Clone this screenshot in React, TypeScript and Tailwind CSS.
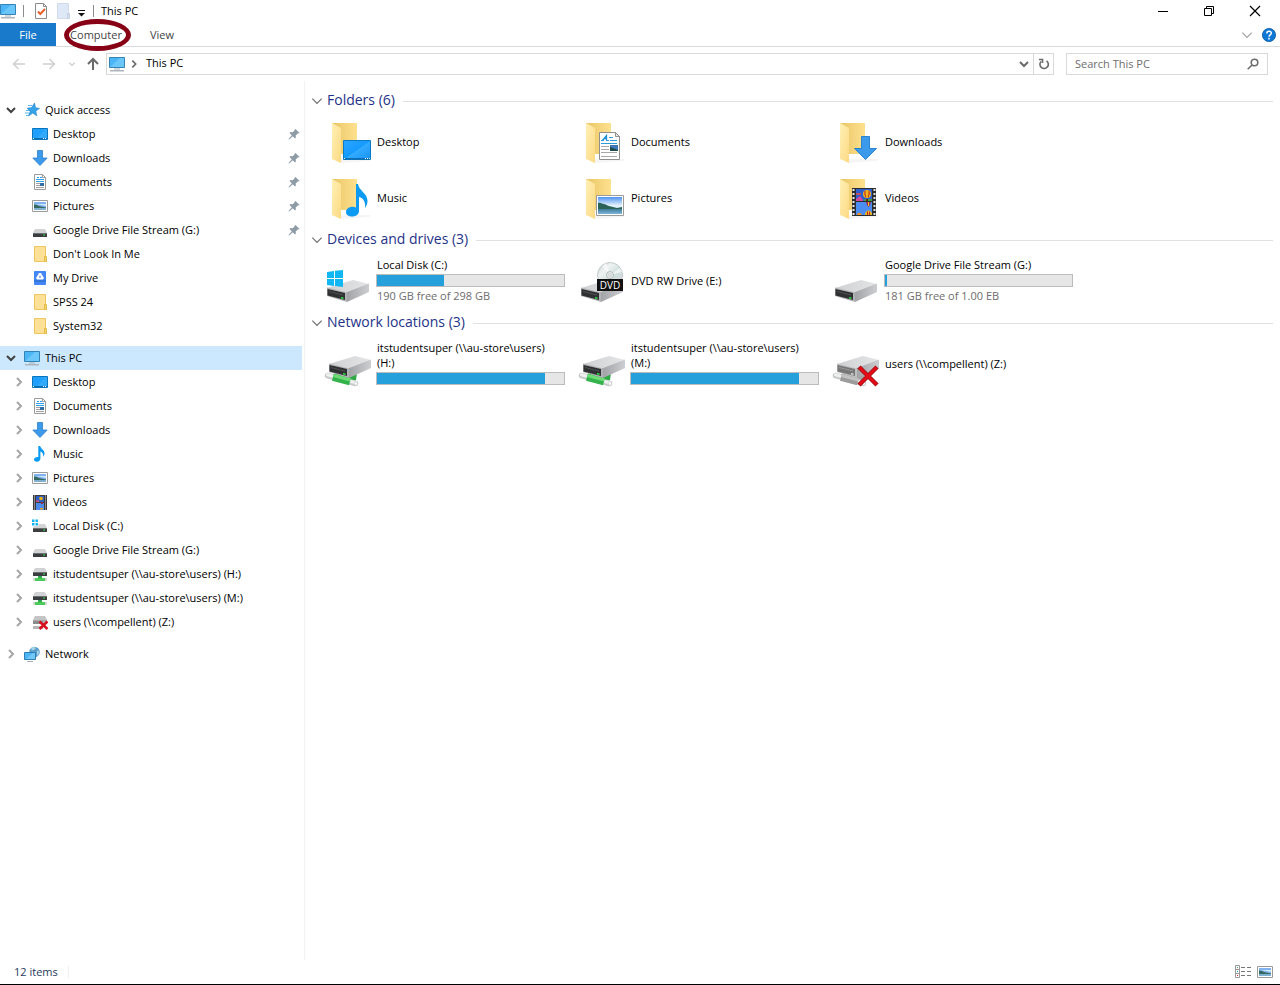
import { useState } from "react";
import type { ReactNode } from "react";

type IconName =
  | "pc"
  | "desktop"
  | "downloads"
  | "documents"
  | "pictures"
  | "music"
  | "videos"
  | "drive"
  | "osdrive"
  | "netdrive"
  | "brokendrive"
  | "folder"
  | "gdrive"
  | "star"
  | "network";

type TreeItem = { id: string; label: string; icon: IconName; pinned?: boolean };

const quickAccess: TreeItem[] = [
  { id: "qa-desktop", label: "Desktop", icon: "desktop", pinned: true },
  { id: "qa-downloads", label: "Downloads", icon: "downloads", pinned: true },
  { id: "qa-documents", label: "Documents", icon: "documents", pinned: true },
  { id: "qa-pictures", label: "Pictures", icon: "pictures", pinned: true },
  { id: "qa-g", label: "Google Drive File Stream (G:)", icon: "drive", pinned: true },
  { id: "qa-look", label: "Don't Look In Me", icon: "folder" },
  { id: "qa-mydrive", label: "My Drive", icon: "gdrive" },
  { id: "qa-spss", label: "SPSS 24", icon: "folder" },
  { id: "qa-sys", label: "System32", icon: "folder" },
];

const thisPc: TreeItem[] = [
  { id: "desktop", label: "Desktop", icon: "desktop" },
  { id: "documents", label: "Documents", icon: "documents" },
  { id: "downloads", label: "Downloads", icon: "downloads" },
  { id: "music", label: "Music", icon: "music" },
  { id: "pictures", label: "Pictures", icon: "pictures" },
  { id: "videos", label: "Videos", icon: "videos" },
  { id: "c", label: "Local Disk (C:)", icon: "osdrive" },
  { id: "g", label: "Google Drive File Stream (G:)", icon: "drive" },
  { id: "h", label: "itstudentsuper (\\\\au-store\\users) (H:)", icon: "netdrive" },
  { id: "m", label: "itstudentsuper (\\\\au-store\\users) (M:)", icon: "netdrive" },
  { id: "z", label: "users (\\\\compellent) (Z:)", icon: "brokendrive" },
];

function SmallDrive({ y, light }: { y: number; light?: boolean }) {
  return (
    <g transform={`translate(0 ${y})`}>
      <path d="M3 0h10l2 4H1z" fill={light ? "#c4c4c4" : "#d2d3d5"} />
      <path d="M1 4h14v4H1z" fill={light ? "#8c8c8c" : "#3a3d40"} />
      <path d="M1 4h14v1H1z" fill={light ? "#a8a8a8" : "#6d7073"} />
      <path d="M11 5.5h2v1h-2z" fill={light ? "#ddd" : "#3be04a"} />
    </g>
  );
}

function MiniPhoto() {
  return (
    <>
      <path d="M.5 2.500h15v11H.5z" fill="#fff" stroke="#9b9b9b" />
      <path d="M2 4h12v8H2z" fill="#7fb2ee" />
      <path d="M2 6c4 0 7 1 12 2V6z" fill="#d3e8fa" />
      <path d="M2 6.500c3 0 4 1.500 7 2l5 1v.5H2z" fill="#35695f" />
      <path d="M2 10h12v2H2z" fill="#7fb0d2" />
    </>
  );
}

function SmallIcon({ name }: { name: IconName }) {
  const art: Record<IconName, ReactNode> = {
    pc: (
      <>
        <path d="M.5 1.500h15v10H.5z" fill="#4bb5f5" stroke="#3383b5" />
        <path d="M1 11 11 2h4v9z" fill="#79cdfb" opacity=".7" />
        <path d="M5 12.500h6v1H5z" fill="#a3b3bd" />
        <path d="M1 14h14v1.500H1z" fill="#aeb6bb" />
      </>
    ),
    desktop: (
      <>
        <path d="M.5 2.500h15v11H.5z" fill="#1e9ffb" stroke="#0a75bd" />
        <path d="M5 12 13 3h2v9z" fill="#3fb0ff" opacity=".6" />
        <path d="M1 12h14v1H1z" fill="#0a6cb0" />
        <path d="M1 12h1v1H1zM11 12h1v1h-1zM13 12h1v1h-1z" fill="#fff" />
      </>
    ),
    downloads: <path d="M5.500.5h5V8h4.700L8 15.500.8 8h4.700z" fill="#3c9aea" stroke="#2c7fc9" strokeWidth=".8" />,
    documents: (
      <>
        <path d="M2.500.5h8l3 3v12h-11z" fill="#fff" stroke="#9a9a9a" />
        <path d="M10.500.5v3h3" fill="none" stroke="#9a9a9a" />
        <path d="M4 5.500h8M4 7.500h8M5 3.500h2M8 3.500h2" stroke="#2b9fe8" />
        <path d="M4 9.500h4M4 11.500h4M4 13.500h8" stroke="#a0a0a0" />
        <path d="M8 9h4v3H8z" fill="#2f6fa8" />
      </>
    ),
    pictures: <MiniPhoto />,
    music: <path d="M6.300 0h1.900c.3 2.800 4.800 4 4.300 7.800-.2 1.500-.9 2.200-1.500 3 .5-2.700-.4-4.500-2.600-5.400V12.500c0 2-1.400 3.200-3.400 3.300C3.200 15.900 2 15 2 13.600c0-1.700 2-2.900 4.300-2.500z" fill="#0c9bf3" />,
    videos: (
      <>
        <path d="M1 1h14v15H1z" fill="#3b3b3b" />
        <path d="M4 2h8v6H4z" fill="#315dc0" />
        <path d="M4 9h8v7H4z" fill="#4c8bea" />
        <path d="M2.500 1.500V16M13.500 1.500V16" stroke="#d8d8d8" strokeDasharray="1 1" />
        <circle cx="9" cy="4.500" r="1.800" fill="#eab414" />
        <path d="M4 6.500h3V8H4z" fill="#d44c8c" />
        <path d="M9 8h2v2H9z" fill="#8e2c48" />
        <path d="M8 14h3v1.500H8z" fill="#e9a71a" />
      </>
    ),
    drive: <SmallDrive y={7} />,
    osdrive: (
      <>
        <SmallDrive y={6} />
        <path d="M0 1h6.500v7H0z" fill="#fff" />
        <path d="M0 1.500h2.500V4H0zM3.500 1.500H6V4H3.500zM0 5h2.500v2.500H0zM3.500 5H6v2.500H3.500z" fill="#10b4f1" />
        <path d="M1 10h14v1H1z" fill="#6d7073" />
      </>
    ),
    netdrive: (
      <>
        <SmallDrive y={2} />
        <path d="M6 10h4v2H6z" fill="#2fa84b" />
        <path d="M2 12h12v3H2z" fill="#4bcb5e" />
        <path d="M1 12h2v3H1zM13 12h2v3h-2z" fill="#d7dad8" />
      </>
    ),
    brokendrive: (
      <>
        <SmallDrive y={2} light />
        <path d="M1 12h10v3H1z" fill="#b5b5b5" />
        <path d="m7.500 7.500 8 7.500M15.500 7.500l-8 7.500" stroke="#d6101c" strokeWidth="2.600" />
      </>
    ),
    folder: (
      <>
        <path d="M2.500.5h11v10l1 .5v4.500h-12z" fill="#fee096" stroke="#edc75d" />
        <path d="M12.500 10.500h2v5h-2z" fill="#fbd777" stroke="#e3b947" />
      </>
    ),
    gdrive: (
      <>
        <rect x="2" y="1" width="12" height="14" rx="1" fill="#4285f4" />
        <path d="M2 10.500h12v1H2z" fill="#2a63c9" />
        <path d="m7 3h2l3 5-1 1.500H5L4 8zm1 2.500L6.800 7.500h2.400z" fill="#fff" fillRule="evenodd" />
      </>
    ),
    star: (
      <>
        <path d="m10.500 1 1 4.700 4 .7-3.700 2.600.9 4.800-3.900-2.700L4.500 14l1.700-4.600L3.200 6.200l4.500-.6z" fill="#35a3e8" stroke="#1b7fc4" strokeWidth=".6" />
        <path d="M4 3.500h4M2 8.500h3M1 11h4M2 13.500h2" stroke="#5bb8ee" />
      </>
    ),
    network: (
      <>
        <circle cx="10.500" cy="6" r="5.300" fill="#5b9fc9" />
        <path d="M7 2c2-1.500 4-1 5 0l-2 2-2 .5zM13 5l2-.5c.5 3-1 5-2 5.500z" fill="#a4d2ea" />
        <path d="M.5 6.500h11v7H.5z" fill="#4bb5f5" stroke="#2f7fb3" />
        <path d="m2 13 7-6h2v6z" fill="#83d1fb" opacity=".7" />
        <path d="M3 15.500h6" stroke="#a4afb6" />
      </>
    ),
  };
  return (
    <svg className="h-4 w-4 shrink-0" viewBox="0 0 16 16" aria-hidden="true">
      {art[name]}
    </svg>
  );
}

function Balloon({ x, y }: { x: number; y: number }) {
  return (
    <g transform={`translate(${x} ${y})`}>
      <circle r="4" fill="#f0b71c" />
      <path d="M-2.500-3Q-3.500 0-1.500 3.500h.8Q-2 0-1.500-3.500zM2.500-3Q3.500 0 1.500 3.500H.7Q2 0 1.500-3.500z" fill="#c5232c" />
      <path d="M-1 5h2v2h-2z" fill="#5b3218" />
    </g>
  );
}

function FolderArt({ children }: { children: ReactNode }) {
  return (
    <svg className="h-12 w-12 shrink-0" viewBox="0 0 48 48" aria-hidden="true">
      <defs>
        <linearGradient id="folderBack" x1="0" x2="1">
          <stop offset="0" stopColor="#e9c566" />
          <stop offset="1" stopColor="#fee18f" />
        </linearGradient>
        <linearGradient id="folderFlap" x1="0" x2="1" y2="1">
          <stop offset="0" stopColor="#fff0b5" />
          <stop offset="1" stopColor="#fcd983" />
        </linearGradient>
        <linearGradient id="screen" x1="0" x2="1" y2="1">
          <stop offset="0" stopColor="#2ba6ff" />
          <stop offset=".5" stopColor="#159aff" />
          <stop offset=".51" stopColor="#33abff" />
          <stop offset="1" stopColor="#1794f4" />
        </linearGradient>
        <linearGradient id="sky" x2="0" y2="1">
          <stop offset="0" stopColor="#4e92f0" />
          <stop offset=".5" stopColor="#e4f2fc" />
          <stop offset="1" stopColor="#b8d8ef" />
        </linearGradient>
        <linearGradient id="lake" x2="0" y2="1">
          <stop offset="0" stopColor="#3f7d97" />
          <stop offset="1" stopColor="#7db4dc" />
        </linearGradient>
      </defs>
      <path d="M16 41h30l-2 2-28 2z" fill="#000" opacity=".04" />
      <path d="M7 5h25v31H7z" fill="url(#folderBack)" />
      <path d="m7 5 9 5v35l-9-4z" fill="url(#folderFlap)" />
      {children}
    </svg>
  );
}

const folders: { label: string; art: ReactNode }[] = [
  {
    label: "Desktop",
    art: (
      <>
        <path d="M18.500 22.500h27v19h-27z" fill="url(#screen)" stroke="#0b78c2" />
        <path d="M19 40h26v1.500H19z" fill="#0a6fb5" />
        <path d="M19 40h1v1h-1zM40 40h1v1h-1zM42 40h1v1h-1zM44 40h1v1h-1z" fill="#fff" />
      </>
    ),
  },
  {
    label: "Documents",
    art: (
      <>
        <path d="M20.500 14.500h16l4 4v23h-20z" fill="#fff" stroke="#8f8f8f" />
        <path d="M36.500 14.500v4h4z" fill="#e8e8e8" stroke="#8f8f8f" />
        <path d="m23.500 22.500 4-5v5M25 20.500h3" fill="none" stroke="#1d8fd3" strokeWidth="1.300" />
        <path d="M22 22.500h3M27 22.500h3M30 19.500h4M31 22.500h7M22 25.500h16" stroke="#2c9be0" />
        <path d="M22 28.500h8M22 31.500h8M22 34.500h16M22 38.500h16" stroke="#a8a8a8" />
        <path d="M31 27h8v6h-8z" fill="#3c78b5" />
        <path d="m31 29 8 3v1h-8z" fill="#1d4c4a" />
      </>
    ),
  },
  {
    label: "Downloads",
    art: <path d="M28.500 18.500h8v12h7l-11 11-11-11h7z" fill="#3c9aea" stroke="#2b83d1" />,
  },
  {
    label: "Music",
    art: <path d="M31 10h2c1 7 9.500 9 9.500 17 0 3-1.200 5-2.500 7 .8-6-1.500-10-6-11v14c0 3.300-3 5.500-7 5.500-3.500 0-6-1.700-6-4.500 0-3.800 5-6.300 10-4.600z" fill="#0c9bf3" />,
  },
  {
    label: "Pictures",
    art: (
      <>
        <path d="M17.500 21.500h27v20h-27z" fill="#fff" stroke="#9b9b9b" />
        <path d="M19 23h24v17H19z" fill="url(#sky)" />
        <path d="M19 29c3-1 4 1 6 1s4 2.500 7 2.500l6 1.500 5-1v3H19z" fill="#2b6257" />
        <path d="M19 35h24v5H19z" fill="url(#lake)" />
      </>
    ),
  },
  {
    label: "Videos",
    art: (
      <>
        <path d="M19 14h24v28H19z" fill="#2c2c2c" />
        <path d="M23 15h16v12H23z" fill="#2d5ed0" />
        <path d="M23 28h16v13H23z" fill="#4b8df0" />
        <path d="M20.500 15v26M41.500 15v26" stroke="#e6e6e6" strokeWidth="2" strokeDasharray="2 2" />
        <path d="m23 25 4-3 3 4v1h-7z" fill="#d5489a" />
        <path d="M23 19h5v2h-5z" fill="#c25060" />
        <path d="M31 25h8v2h-8z" fill="#3d9f49" />
        <Balloon x={34} y={20} />
        <path d="M33 28h5l-1 3-1.500 2L34 31z" fill="#9c2b4a" />
        <path d="M35 28h1v4h-1z" fill="#f2c21d" />
        <path d="M32 41c0-6 7-6 7 0z" fill="#f0b71c" />
        <path d="M34 37.500h1V41h-1zM36 37.500h1V41h-1z" fill="#c5232c" />
        <path d="M24 41c0-3 4-3 5 0z" fill="#e98f25" />
      </>
    ),
  },
];

function DriveBody({ broken }: { broken?: boolean }) {
  return (
    <>
      <path d="m2 31 26-8 16 4-22 9z" fill="url(#driveTop)" />
      <path d="m21 35.500 23-9V35l-22 10z" fill="url(#driveSide)" />
      <path d="m2 30.500 20 5V45L2 39z" fill={broken ? "#c0c0c0" : "#b1b2b5"} />
      <path d="M2.500 32 20 36v7L2.500 38.500z" fill={broken ? "#777" : "#2f3032"} />
      <path d="M4 34.500 18 38" stroke={broken ? "#999" : "#4f5153"} />
      <path d="m16 40 2.500.5V42L16 41.500z" fill={broken ? "#ddd" : "#2fe042"} />
    </>
  );
}

function NetworkPipe({ broken }: { broken?: boolean }) {
  return (
    <>
      <path d="m22 36 10-3-1 7-7 3z" fill={broken ? "#a6a6a6" : "#2fa846"} />
      <path d="m2.500 35.500 28 8" stroke="#c5c9c7" strokeWidth="5.500" strokeLinecap="round" />
      <path d="m2.500 34.800 28 8" stroke="#eef0ef" strokeWidth="3" strokeLinecap="round" />
      <path d="m8 37 17 4.500" stroke={broken ? "#9c9c9c" : "#34b34c"} strokeWidth="8" />
      <path d="m8.500 35.500 17 4.500" stroke={broken ? "#c2c2c2" : "#6edb76"} strokeWidth="3" />
      <ellipse cx="31" cy="43.500" rx="1.500" ry="2" fill="#fff" stroke="#c3c8c5" strokeWidth=".6" />
    </>
  );
}

function DriveArt({ kind }: { kind: "os" | "dvd" | "plain" | "net" | "broken" }) {
  const networked = kind === "net" || kind === "broken";
  return (
    <svg className="h-12 w-12 shrink-0 overflow-visible" viewBox="0 0 48 48" aria-hidden="true">
      <defs>
        <linearGradient id="driveTop" x1="0" x2="1">
          <stop offset="0" stopColor="#cfd0d2" />
          <stop offset="1" stopColor="#e4e5e7" />
        </linearGradient>
        <linearGradient id="driveSide" x1="0" x2="1">
          <stop offset="0" stopColor="#a0a1a4" />
          <stop offset="1" stopColor="#cdced1" />
        </linearGradient>
        <linearGradient id="disc" x1="0" x2="1" y2="1">
          <stop offset="0" stopColor="#c5cdcd" />
          <stop offset=".3" stopColor="#eef2f2" />
          <stop offset=".6" stopColor="#cfe0dc" />
          <stop offset="1" stopColor="#dcd6e2" />
        </linearGradient>
      </defs>
      {networked && <NetworkPipe broken={kind === "broken"} />}
      <g transform={networked ? "translate(2 -7)" : undefined}>
        <DriveBody broken={kind === "broken"} />
      </g>
      {kind === "os" && (
        <path d="m2 15 7-1v7H2zM10 13.800 18 13v8h-8zM2 22h7v7l-7-1zM10 22h8v8l-8-1z" fill="#10b7f3" />
      )}
      {kind === "dvd" && (
        <>
          <circle cx="31" cy="18" r="12.500" fill="url(#disc)" stroke="#b9c0c0" strokeWidth=".8" />
          <path d="M31 18 23 9l4-3zM31 18l10-7 2 4z" fill="#fff" opacity=".6" />
          <circle cx="31" cy="18" r="3.500" fill="#e7eaea" stroke="#aab2b2" strokeWidth=".8" />
          <circle cx="31" cy="18" r="1.300" fill="#fff" stroke="#aab2b2" strokeWidth=".6" />
          <path d="M18 22h26v12H18z" fill="#111" />
          <text x="31" y="32" fill="#fff" fontSize="10" textAnchor="middle" fontFamily="Open Sans, sans-serif">
            DVD
          </text>
        </>
      )}
      {kind === "broken" && (
        <>
          <path d="m26 27 18 18M44 27 26 45" stroke="#9c0d14" strokeWidth="4.500" />
          <path d="m26.500 27.500 17 17M43.500 27.500l-17 17" stroke="#e30d18" strokeWidth="3" />
        </>
      )}
    </svg>
  );
}

function Chevron({ dir, className }: { dir: "down" | "right"; className: string }) {
  return (
    <svg className={className} viewBox="0 0 12 12" fill="none" stroke="currentColor" aria-hidden="true">
      <path d={dir === "down" ? "m2 4 4 4 4-4" : "m4 2 4 4-4 4"} />
    </svg>
  );
}

function Pin() {
  return (
    <svg className="ml-auto h-3 w-3 text-[#8d9ba5]" viewBox="0 0 12 12" aria-hidden="true">
      <path d="m7.500 1 4 4-1.200.5-.6-.1-2 2 .2 2.200-.9.900-2.300-2.300L1.200 11.500.5 11l3.300-3.700L1.500 5l.9-.9 2.300.2 2-2-.1-.7z" fill="currentColor" />
    </svg>
  );
}

type RowProps = {
  item: TreeItem;
  level: 0 | 1;
  chevron?: "down" | "right";
  selected?: boolean;
  onSelect: (id: string) => void;
};

function TreeRow({ item, level, chevron, selected, onSelect }: RowProps) {
  return (
    <button
      type="button"
      onClick={() => onSelect(item.id)}
      className={`flex h-6 w-full items-center pr-[2px] text-left whitespace-nowrap ${
        level === 0 ? "pl-1" : "pl-3"
      } ${selected ? "bg-[#cce8ff]" : "hover:bg-[#e5f3ff]"}`}
    >
      <span className="w-5 shrink-0">
        {chevron && (
          <Chevron
            dir={chevron}
            className={`ml-px h-3 w-3 stroke-2 ${chevron === "down" ? "text-[#404040]" : "text-[#a6a6a6]"}`}
          />
        )}
      </span>
      <SmallIcon name={item.icon} />
      <span className="ml-[5px]">{item.label}</span>
      {item.pinned && <Pin />}
    </button>
  );
}

function Section({ title, children }: { title: string; children: ReactNode }) {
  const [open, setOpen] = useState(true);
  return (
    <section className="mb-px">
      <button
        type="button"
        aria-expanded={open}
        onClick={() => setOpen(!open)}
        className="flex h-[26px] w-full items-center pr-[7px] pl-[5px]"
      >
        <Chevron dir={open ? "down" : "right"} className="mr-[3px] h-[14px] w-[14px] shrink-0 text-[#6d6d6d]" />
        <h2 className="pb-[2px] text-[14px] leading-5 text-[#1e3287]">{title}</h2>
        <span className="ml-2 h-px flex-1 bg-[#e2e2e2]" />
      </button>
      {open && <div className="grid grid-cols-[repeat(auto-fill,254px)] pl-5">{children}</div>}
    </section>
  );
}

type TileProps = { icon: ReactNode; label: string; used?: number; note?: string };

function Tile({ icon, label, used, note }: TileProps) {
  return (
    <div className="flex h-14 items-center">
      {icon}
      <div className="ml-[3px] w-[189px] pb-[2px] leading-[15px]">
        <p className="pr-2 pl-px">{label}</p>
        {used !== undefined && (
          <div className="mt-[2px] mb-px h-[13px] border border-[#bcbcbc] bg-[#e6e6e6]">
            <div className="h-full bg-[#26a0da]" style={{ width: `${used}%` }} />
          </div>
        )}
        {note && <p className="pl-px text-[#6d6d6d]">{note}</p>}
      </div>
    </div>
  );
}

function TitleBar() {
  return (
    <header className="flex h-[23px] items-center pb-px">
      <SmallIcon name="pc" />
      <span className="mr-[9px] ml-[7px] h-3 w-px bg-[#8c8c8c]" />
      <button type="button" aria-label="Properties" className="h-4 w-4">
        <svg viewBox="0 0 16 16" aria-hidden="true">
          <path d="M2.500.5h8l3 3v12h-11z" fill="#fff" stroke="#8d8d8d" />
          <path d="M10.500.5v3h3" fill="none" stroke="#8d8d8d" />
          <path d="m5 8.500 2.300 2.500L12 6" fill="none" stroke="#e8602c" strokeWidth="2" />
        </svg>
      </button>
      <button type="button" aria-label="New folder" className="ml-[6px] h-4 w-4">
        <svg viewBox="0 0 16 16" aria-hidden="true">
          <path d="M2.500.5h11v10l1 .5v4.500h-12z" fill="#dfe8f6" stroke="#d0daea" />
          <path d="M12.500 10.500h2v5h-2z" fill="#d5dfef" stroke="#c5d0e4" />
        </svg>
      </button>
      <button type="button" aria-label="Customize toolbar" className="ml-1 h-4 w-3">
        <svg viewBox="0 0 12 16" aria-hidden="true">
          <path d="M3 7.500h7" stroke="#111" />
          <path d="M3 10h7l-3.500 3.500z" fill="#111" />
        </svg>
      </button>
      <span className="mr-[7px] ml-[6px] h-3 w-px bg-[#8c8c8c]" />
      <h1>This PC</h1>
      <div className="mr-[2px] ml-auto flex">
        <button type="button" aria-label="Minimize" className="flex w-[46px] justify-center">
          <svg className="h-5 w-3" viewBox="0 0 12 20" stroke="#000">
            <path d="M1 10.500h10" />
          </svg>
        </button>
        <button type="button" aria-label="Restore" className="flex w-[46px] justify-center">
          <svg className="h-5 w-3" viewBox="0 0 12 20" fill="none" stroke="#000">
            <path d="M1.500 7.500h7v7h-7zM3.500 7.500v-2h7v7h-2" />
          </svg>
        </button>
        <button type="button" aria-label="Close" className="flex w-[46px] justify-center">
          <svg className="h-5 w-3" viewBox="0 0 12 20" stroke="#000" strokeWidth="1.200">
            <path d="m1 5 10 10M11 5 1 15" />
          </svg>
        </button>
      </div>
    </header>
  );
}

function Ribbon() {
  return (
    <div className="flex h-6 border-b border-[#dadbdc] text-[#444]">
      <button type="button" className="w-14 bg-[#1979ca] text-white">
        File
      </button>
      <button type="button" className="relative w-20">
        Computer
        <span className="absolute -top-1 left-2 h-8 w-[67px] rounded-[50%] border-5 border-[#880015]" />
      </button>
      <button type="button" className="w-[52px]">
        View
      </button>
      <button type="button" aria-label="Expand ribbon" className="ml-auto text-[#a0a0a0]">
        <Chevron dir="down" className="h-[14px] w-[14px]" />
      </button>
      <button type="button" aria-label="Help" className="mr-1 ml-2">
        <svg className="h-[14px] w-[14px]" viewBox="0 0 14 14">
          <circle cx="7" cy="7" r="6.600" fill="#0f78d4" stroke="#0a5ca8" strokeWidth=".8" />
          <path d="M4.800 5.400c0-3 4.600-2.800 4.500-.2C9.200 6.800 7.100 6.800 7 8.600M7 9.800v1.700" fill="none" stroke="#fff" strokeWidth="1.500" />
        </svg>
      </button>
    </div>
  );
}

function AddressRow() {
  const [query, setQuery] = useState("");
  return (
    <div className="flex h-[34px] items-center pr-3">
      <nav className="flex w-[106px] shrink-0 items-center text-[#d0d0d0]" aria-label="History">
        <button type="button" aria-label="Back" className="ml-3">
          <svg className="h-[14px] w-[14px]" viewBox="0 0 14 14" fill="none" stroke="currentColor" strokeWidth="1.500">
            <path d="M13 7H1.500M6.500 2l-5 5 5 5" />
          </svg>
        </button>
        <button type="button" aria-label="Forward" className="ml-4">
          <svg className="h-[14px] w-[14px]" viewBox="0 0 14 14" fill="none" stroke="currentColor" strokeWidth="1.500">
            <path d="M1 7h11.500M7.500 2l5 5-5 5" />
          </svg>
        </button>
        <button type="button" aria-label="Recent locations" className="ml-3">
          <Chevron dir="down" className="h-2 w-2 stroke-2" />
        </button>
        <button type="button" aria-label="Up" className="ml-[10px] text-[#6a6a6a]">
          <svg className="h-[14px] w-[14px]" viewBox="0 0 14 14" fill="none" stroke="currentColor" strokeWidth="2">
            <path d="M7 13V2M2 7l5-5 5 5" />
          </svg>
        </button>
      </nav>
      <div className="flex h-[22px] flex-1 items-center border border-[#d9d9d9] pl-[2px] text-[#6a6a6a]">
        <SmallIcon name="pc" />
        <Chevron dir="right" className="ml-1 h-[10px] w-[10px] stroke-2" />
        <button type="button" className="ml-[7px] pb-[2px] text-black">
          This PC
        </button>
        <button type="button" aria-label="Previous locations" className="ml-auto">
          <Chevron dir="down" className="mr-[3px] h-3 w-3 stroke-2" />
        </button>
        <button type="button" aria-label="Refresh" className="flex h-full w-5 items-center justify-center border-l border-[#d9d9d9]">
          <svg className="h-3 w-3" viewBox="0 0 12 12" fill="none" stroke="currentColor" strokeWidth="1.600">
            <path d="M8.500 2.800A4.200 4.200 0 1 1 3 3.500M1 1.500h3.500V5" />
          </svg>
        </button>
      </div>
      <label className="ml-3 flex h-[22px] w-[202px] items-center border border-[#d9d9d9] px-2 text-[#6d6d6d]">
        <input
          aria-label="Search This PC"
          placeholder="Search This PC"
          value={query}
          onChange={(e) => setQuery(e.target.value)}
          className="min-w-0 flex-1 outline-none placeholder:text-[#6d6d6d]"
        />
        <svg className="h-3 w-3" viewBox="0 0 12 12" fill="none" stroke="currentColor" strokeWidth="1.600" aria-hidden="true">
          <circle cx="7.500" cy="4.500" r="3.300" />
          <path d="m5 7-4.300 4.300" />
        </svg>
      </label>
    </div>
  );
}

export default function App() {
  const [selected, setSelected] = useState("this-pc");

  const row = (item: TreeItem, level: 0 | 1, chevron?: "down" | "right") => (
    <TreeRow
      key={item.id}
      item={item}
      level={level}
      chevron={chevron}
      selected={selected === item.id}
      onSelect={setSelected}
    />
  );

  return (
    <div className="flex min-h-screen flex-col border-b border-black bg-white font-['Open_Sans',sans-serif] text-[11px] leading-4 text-black">
      <TitleBar />
      <Ribbon />
      <AddressRow />

      <div className="flex flex-1">
        <aside className="flex w-[305px] shrink-0 flex-col gap-2 border-r border-[#f2f2f2] pt-[17px] pr-[2px]">
          <div>
            {row({ id: "quick", label: "Quick access", icon: "star" }, 0, "down")}
            {quickAccess.map((item) => row(item, 1))}
          </div>
          <div>
            {row({ id: "this-pc", label: "This PC", icon: "pc" }, 0, "down")}
            {thisPc.map((item) => row(item, 1, "right"))}
          </div>
          <div>{row({ id: "network", label: "Network", icon: "network" }, 0, "right")}</div>
        </aside>

        <main className="min-w-0 flex-1 pt-[7px]">
          <Section title="Folders (6)">
            {folders.map((f) => (
              <Tile key={f.label} icon={<FolderArt>{f.art}</FolderArt>} label={f.label} />
            ))}
          </Section>
          <Section title="Devices and drives (3)">
            <Tile icon={<DriveArt kind="os" />} label="Local Disk (C:)" used={36} note="190 GB free of 298 GB" />
            <Tile icon={<DriveArt kind="dvd" />} label="DVD RW Drive (E:)" />
            <Tile
              icon={<DriveArt kind="plain" />}
              label="Google Drive File Stream (G:)"
              used={1}
              note="181 GB free of 1.00 EB"
            />
          </Section>
          <Section title="Network locations (3)">
            <Tile icon={<DriveArt kind="net" />} label="itstudentsuper (\\au-store\users) (H:)" used={90} />
            <Tile icon={<DriveArt kind="net" />} label="itstudentsuper (\\au-store\users) (M:)" used={90} />
            <Tile icon={<DriveArt kind="broken" />} label="users (\\compellent) (Z:)" />
          </Section>
        </main>
      </div>

      <footer className="flex h-6 items-center pr-[7px] pl-[14px] text-[#1e395b]">
        <span>12 items</span>
        <span className="ml-[10px] h-3 w-px bg-[#f0f0f0]" />
        <button type="button" aria-label="Details view" className="ml-auto">
          <svg className="h-4 w-4" viewBox="0 0 16 16" fill="none">
            <path d="M.5 1.500h4v12h-4zM.5 5.500h4M.5 9.500h4" stroke="#999" />
            <path d="M6 3.500h4M12 3.500h4M6 7.500h4M12 7.500h4M6 11.500h4M12 11.500h4" stroke="#777" />
            <path d="M2 3h1v1H2z" fill="#3a6" />
            <path d="M2 7h1v1H2z" fill="#29c" />
            <path d="M2 11h1v1H2z" fill="#d22" />
          </svg>
        </button>
        <button type="button" aria-label="Large icons view" className="ml-[6px]">
          <svg className="h-4 w-4" viewBox="0 0 16 16">
            <MiniPhoto />
          </svg>
        </button>
      </footer>
    </div>
  );
}
